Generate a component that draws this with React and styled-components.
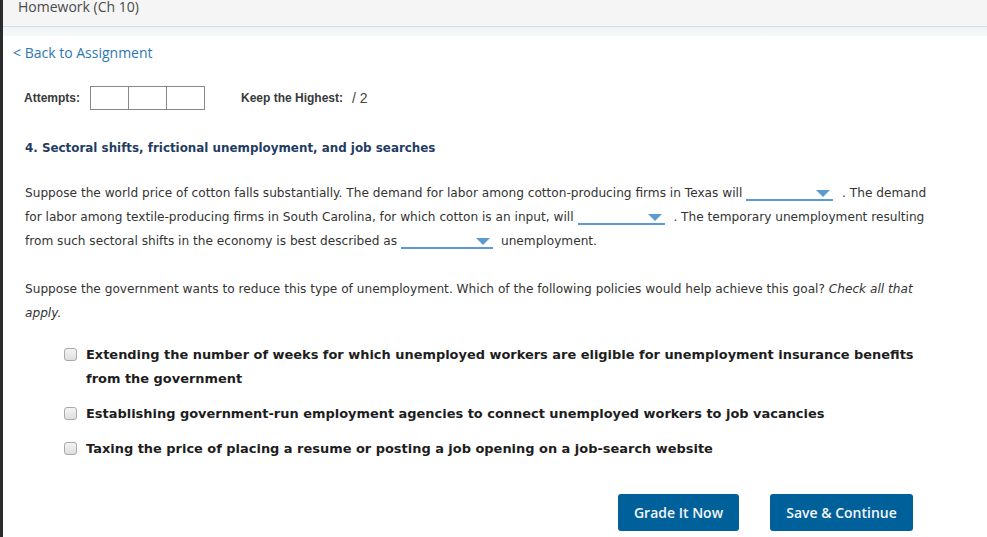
import React from 'react';
import styled, { createGlobalStyle } from 'styled-components';

const GlobalStyle = createGlobalStyle`
  html, body {
    margin: 0;
    padding: 0;
    background: #ffffff;
  }
  body {
    font-family: "DejaVu Sans", Verdana, sans-serif;
  }
`;

const Page = styled.div`
  display: flex;
  width: 987px;
  height: 537px;
  overflow: hidden;
  background: #fff;
`;

const EdgeStrip = styled.div`
  width: 3px;
  flex: none;
  background: #2b2b2b;
`;

const Main = styled.div`
  flex: 1;
  display: flex;
  flex-direction: column;
`;

const TopBar = styled.div`
  height: 26px;
  background: #f5f5f5;
  border-bottom: 1px solid #dcdcdc;
  display: flex;
  align-items: flex-start;
  padding-left: 15px;
  box-sizing: content-box;
`;

const TopTitle = styled.div`
  font-family: "Open Sans", sans-serif;
  font-size: 14px;
  color: #4a4a4a;
  line-height: 14px;
`;

const Shade = styled.div`
  height: 9px;
  background: linear-gradient(#eef3f5, #f7fafb);
`;

const Content = styled.div`
  padding: 7px 0 0 10px;
`;

const BackLink = styled.a`
  display: inline-block;
  font-family: "Open Sans", sans-serif;
  font-size: 14px;
  color: #2b78b3;
  text-decoration: none;
  line-height: 20px;
`;

const AttemptsRow = styled.div`
  display: flex;
  align-items: center;
  margin-top: 23px;
  padding-left: 11px;
  height: 24px;
`;

const SmallLabel = styled.span`
  font-family: "Liberation Sans", Arial, sans-serif;
  font-weight: bold;
  font-size: 12px;
  color: #3a3a3a;
`;

const Boxes = styled.div`
  display: flex;
  margin-left: 10px;
  border: 1px solid #888;
  height: 22px;
`;

const Box = styled.div`
  width: 37px;
  border-left: ${p => (p.first ? 'none' : '1px solid #888')};
`;

const KeepWrap = styled.div`
  display: flex;
  align-items: center;
  margin-left: 36px;
`;

const Score = styled.span`
  font-family: "Liberation Sans", Arial, sans-serif;
  font-size: 14px;
  color: #444;
  margin-left: 9px;
`;

const Question = styled.div`
  padding-left: 12px;
  margin-top: 31px;
`;

const Heading = styled.h3`
  margin: 0;
  font-size: 11.9px;
  font-weight: bold;
  color: #1f3d63;
  line-height: 14px;
`;

const Para = styled.p`
  margin: ${p => p.top}px 0 0;
  font-size: 12.15px;
  line-height: 24px;
  color: #333;
  width: 915px;
`;

const Drop = styled.span`
  display: inline-block;
  position: relative;
  width: ${p => p.w}px;
  height: 13px;
  border-bottom: 2px solid #5b9bd1;
  vertical-align: -4px;
  margin: 0 ${p => p.r}px 0 4px;
`;

const Arrow = styled.span`
  position: absolute;
  right: 3px;
  top: 4px;
  width: 0;
  height: 0;
  border-left: 7px solid transparent;
  border-right: 7px solid transparent;
  border-top: 7px solid #5b9bd1;
`;

const Options = styled.div`
  margin-top: 18px;
  padding-left: 39px;
  display: flex;
  flex-direction: column;
  gap: 11px;
`;

const Option = styled.label`
  display: flex;
  align-items: flex-start;
`;

const Check = styled.span`
  flex: none;
  width: 11px;
  height: 11px;
  margin-top: 5px;
  border: 1px solid #a9a9a9;
  border-radius: 3px;
  background: linear-gradient(#f4f4f4, #dedede);
`;

const OptionText = styled.span`
  margin-left: 9px;
  font-size: 12.95px;
  font-weight: bold;
  line-height: 24px;
  color: #1d1d1d;
  width: 850px;
`;

const Actions = styled.div`
  display: flex;
  gap: 31px;
  margin-top: 33px;
  padding-left: 605px;
`;

const Button = styled.button`
  height: 37px;
  width: ${p => p.w}px;
  background: #00609a;
  color: #f2f6fa;
  border: none;
  border-radius: 3px;
  font-family: "Open Sans", sans-serif;
  font-weight: 600;
  font-size: 14px;
  padding: 0;
`;

const Dropdown = ({ w, r = 5 }) => (
  <Drop w={w} r={r}>
    <Arrow />
  </Drop>
);

export default function App() {
  return (
    <>
      <GlobalStyle />
      <Page>
        <EdgeStrip />
        <Main>
          <TopBar>
            <TopTitle>Homework (Ch 10)</TopTitle>
          </TopBar>
          <Shade />
          <Content>
            <BackLink href="#">&lt; Back to Assignment</BackLink>
            <AttemptsRow>
              <SmallLabel>Attempts:</SmallLabel>
              <Boxes>
                <Box first />
                <Box />
                <Box />
              </Boxes>
              <KeepWrap>
                <SmallLabel>Keep the Highest:</SmallLabel>
                <Score>/ 2</Score>
              </KeepWrap>
            </AttemptsRow>
            <Question>
              <Heading>4. Sectoral shifts, frictional unemployment, and job searches</Heading>
              <Para top={26}>
                Suppose the world price of cotton falls substantially. The demand for labor among cotton-producing firms in Texas will
                <Dropdown w={87} /> . The demand for labor among textile-producing firms in South Carolina, for which cotton is an input, will
                <Dropdown w={87} /> . The temporary unemployment resulting from such sectoral shifts in the economy is best described as
                <Dropdown w={92} r={4} /> unemployment.
              </Para>
              <Para top={24}>
                Suppose the government wants to reduce this type of unemployment. Which of the following policies would help achieve this goal? <i>Check all that apply.</i>
              </Para>
              <Options>
                <Option>
                  <Check />
                  <OptionText>Extending the number of weeks for which unemployed workers are eligible for unemployment insurance benefits from the government</OptionText>
                </Option>
                <Option>
                  <Check />
                  <OptionText>Establishing government-run employment agencies to connect unemployed workers to job vacancies</OptionText>
                </Option>
                <Option>
                  <Check />
                  <OptionText>Taxing the price of placing a resume or posting a job opening on a job-search website</OptionText>
                </Option>
              </Options>
            </Question>
            <Actions>
              <Button w={121}>Grade It Now</Button>
              <Button w={143}>Save &amp; Continue</Button>
            </Actions>
          </Content>
        </Main>
      </Page>
    </>
  );
}
